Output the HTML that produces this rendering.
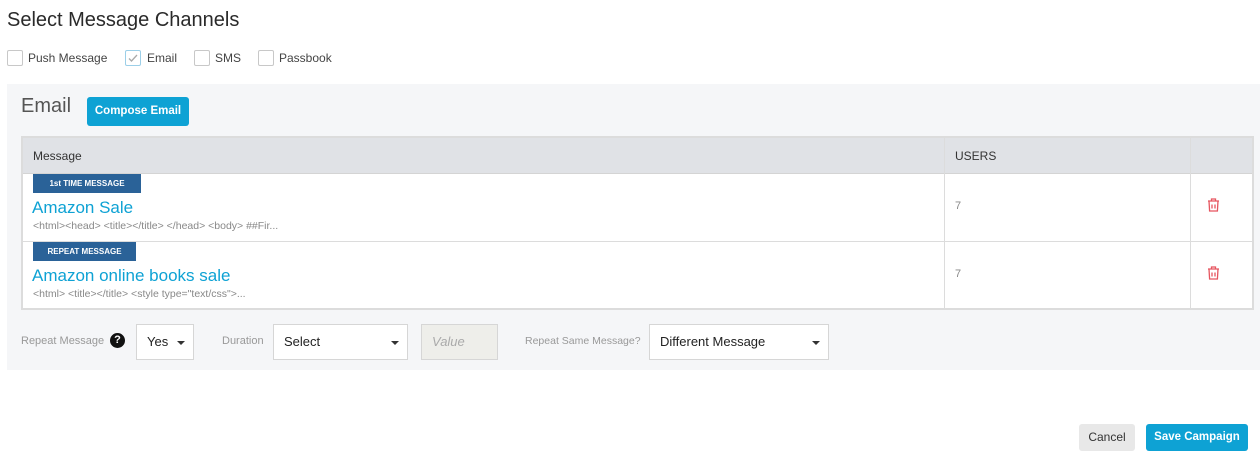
<!DOCTYPE html>
<html><head><style>
*{box-sizing:border-box;margin:0;padding:0}
body{width:1260px;height:463px;background:#fff;font-family:"Liberation Sans",sans-serif;position:relative;overflow:hidden;color:#333}
.a{position:absolute}
.cb{position:absolute;width:16px;height:16px;border:1px solid #c8c8c8;border-radius:2px;background:#fff;top:50px}
.lbl{position:absolute;top:51px;font-size:12px;color:#444}
.panel{left:7px;top:84px;width:1253px;height:286px;background:#f5f6f8}
.tbl{left:21px;top:136px;width:1233px;height:174px;border:2px solid #dcdcdc;background:#fff}
.badge{position:absolute;left:10px;height:19px;background:#2a6298;color:#fff;font-size:8px;font-weight:bold;line-height:19px;text-align:center}
.ttl{position:absolute;left:9px;font-size:17px;color:#0ea2d4}
.sub{position:absolute;left:10px;font-size:10.5px;color:#888}
.sel{position:absolute;top:324px;height:36px;border:1px solid #d6d6d6;background:#fff;font-size:13px;color:#222;line-height:34px;padding-left:10px}
.car{position:absolute;right:8px;top:16px;width:0;height:0;border-left:4px solid transparent;border-right:4px solid transparent;border-top:4px solid #333}
.fl{position:absolute;top:335px;font-size:11px;color:#999}
</style></head><body>
<div class="a" style="left:7px;top:9px;font-size:20px;color:#2a2a2a">Select Message Channels</div>
<div class="cb" style="left:7px"></div><div class="lbl" style="left:28px">Push Message</div>
<div class="cb" style="left:125px;border-color:#9ccfe8"><svg width="14" height="14" viewBox="0 0 14 14" style="position:absolute;left:0;top:0"><path d="M3 7.5l2.5 2.5L11 4" stroke="#aaa" stroke-width="1.3" fill="none"/></svg></div><div class="lbl" style="left:147px">Email</div>
<div class="cb" style="left:194px"></div><div class="lbl" style="left:215px">SMS</div>
<div class="cb" style="left:258px"></div><div class="lbl" style="left:279px">Passbook</div>
<div class="a panel"></div>
<div class="a" style="left:21px;top:95px;font-size:20px;color:#555">Email</div>
<div class="a" style="left:87px;top:97px;width:102px;height:29px;background:#0ea2d4;border-radius:3px;color:#fff;font-size:11.5px;font-weight:bold;text-align:center;line-height:29px">Compose Email</div>
<div class="a tbl">
 <div class="a" style="left:0;top:0;width:1229px;height:36px;background:#e0e2e6;border-bottom:1px solid #d4d4d4"></div>
 <div class="a" style="left:10px;top:11px;font-size:12px;color:#333">Message</div>
 <div class="a" style="left:932px;top:11px;font-size:12px;color:#333">USERS</div>
 <div class="a" style="left:921px;top:0;width:1px;height:170px;background:#dcdcdc"></div>
 <div class="a" style="left:1167px;top:0;width:1px;height:170px;background:#dcdcdc"></div>
 <div class="a" style="left:0;top:103px;width:1229px;height:1px;background:#dcdcdc"></div>
 <div class="badge" style="top:36px;width:108px">1st TIME MESSAGE</div>
 <div class="ttl" style="top:60px">Amazon Sale</div>
 <div class="sub" style="top:82px">&lt;html&gt;&lt;head&gt; &lt;title&gt;&lt;/title&gt; &lt;/head&gt; &lt;body&gt; ##Fir...</div>
 <div class="a" style="left:932px;top:62px;font-size:11px;color:#888">7</div>
 <div class="badge" style="top:104px;width:103px">REPEAT MESSAGE</div>
 <div class="ttl" style="top:128px">Amazon online books sale</div>
 <div class="sub" style="top:150px">&lt;html&gt; &lt;title&gt;&lt;/title&gt; &lt;style type="text/css"&gt;...</div>
 <div class="a" style="left:932px;top:130px;font-size:11px;color:#888">7</div>
 <svg class="a" style="left:1183px;top:59px" width="15" height="16" viewBox="0 0 15 16"><path d="M2 4h11M5.5 4V2h4v2M3 4l.6 10h7.8L12 4M6 7.5v4M9 7.5v4" stroke="#e6555f" stroke-width="1.3" fill="none"/></svg>
 <svg class="a" style="left:1183px;top:127px" width="15" height="16" viewBox="0 0 15 16"><path d="M2 4h11M5.5 4V2h4v2M3 4l.6 10h7.8L12 4M6 7.5v4M9 7.5v4" stroke="#e6555f" stroke-width="1.3" fill="none"/></svg>
</div>
<div class="fl" style="left:21px">Repeat Message</div>
<div class="a" style="left:110px;top:333px;width:15px;height:15px;border-radius:50%;background:#111;color:#fff;font-size:11px;font-weight:bold;text-align:center;line-height:15px">?</div>
<div class="sel" style="left:136px;width:58px">Yes<span class="car"></span></div>
<div class="fl" style="left:222px">Duration</div>
<div class="sel" style="left:273px;width:135px">Select<span class="car"></span></div>
<div class="sel" style="left:421px;width:77px;background:#eeeeea;color:#aaa;font-style:italic">Value</div>
<div class="fl" style="left:525px;font-size:10.5px">Repeat Same Message?</div>
<div class="sel" style="left:649px;width:180px">Different Message<span class="car"></span></div>
<div class="a" style="left:1079px;top:424px;width:56px;height:27px;background:#e8e8e8;border-radius:3px;font-size:12px;color:#333;text-align:center;line-height:27px">Cancel</div>
<div class="a" style="left:1146px;top:424px;width:102px;height:27px;background:#0ea2d4;border-radius:3px;font-size:11.5px;font-weight:bold;color:#fff;text-align:center;line-height:27px">Save Campaign</div>
</body></html>
